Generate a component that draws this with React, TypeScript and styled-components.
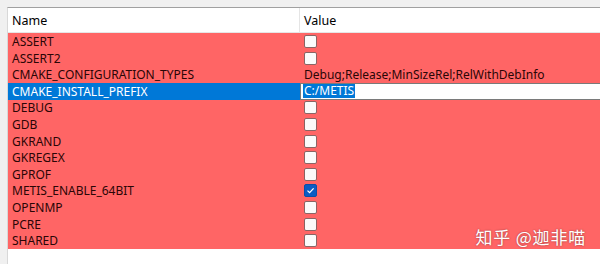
import React from "react";
import styled, { createGlobalStyle } from "styled-components";

const Global = createGlobalStyle`
  html, body { margin: 0; padding: 0; }
  body {
    width: 600px;
    height: 264px;
    overflow: hidden;
    background: #f0f0f0;
    font-family: "Noto Sans", "Noto Sans CJK SC", sans-serif;
  }
`;

const Frame = styled.div`
  padding: 7px 0 0 7px;
  height: 264px;
  box-sizing: border-box;
`;

const Table = styled.div`
  background: #ffffff;
  border-top: 1px solid #a0a0a0;
  border-left: 1px solid #d8d8d8;
  height: 256px;
  position: relative;
`;

const Header = styled.div`
  display: grid;
  grid-template-columns: 292px 1fr;
  height: 24px;
  border-bottom: 1px solid #e6e6e6;
  font-size: 12.5px;
  color: #000;
`;

const HeadCell = styled.div<{ $divider?: boolean }>`
  display: flex;
  align-items: center;
  padding-left: 4px;
  border-right: ${(p) => (p.$divider ? "1px solid #e5e5e5" : "none")};
`;

const Row = styled.div`
  display: grid;
  grid-template-columns: 292px 1fr;
  height: 16.6px;
  background: #ff6565;
  font-size: 12px;
  color: #2a0606;
`;

const NameCell = styled.div<{ $selected?: boolean }>`
  display: flex;
  align-items: center;
  padding-left: 4px;
  white-space: nowrap;
  background: ${(p) => (p.$selected ? "#0078d7" : "transparent")};
  color: ${(p) => (p.$selected ? "#ffffff" : "inherit")};
`;

const ValueCell = styled.div`
  display: flex;
  align-items: center;
  padding-left: 4px;
  white-space: nowrap;
`;

const Editor = styled.div`
  display: flex;
  align-items: center;
  background: #ffffff;
  border: 1px solid #7a7a7a;
  border-right: none;
  box-sizing: border-box;
  padding-left: 2px;
`;

const Selection = styled.span`
  background: #0078d7;
  color: #ffffff;
  padding: 0 1px;
  line-height: 14px;
`;

const Box = styled.span<{ $checked?: boolean }>`
  width: 11px;
  height: 11px;
  border-radius: 2px;
  border: 1px solid ${(p) => (p.$checked ? "#0a4fa8" : "#8a6464")};
  background: ${(p) => (p.$checked ? "#0b5cc4" : "#fbfbfb")};
  display: inline-flex;
  align-items: center;
  justify-content: center;
`;

const Watermark = styled.div`
  position: absolute;
  right: 14px;
  bottom: 15px;
  font-size: 17px;
  color: #ffffff;
  text-shadow: 0 0 2px rgba(0, 0, 0, 0.45);
  font-family: "Noto Sans CJK SC", sans-serif;
  letter-spacing: 0.8px;
`;

type Item = { name: string; value: string; selected?: boolean };

const items: Item[] = [
  { name: "ASSERT", value: "off" },
  { name: "ASSERT2", value: "off" },
  { name: "CMAKE_CONFIGURATION_TYPES", value: "Debug;Release;MinSizeRel;RelWithDebInfo" },
  { name: "CMAKE_INSTALL_PREFIX", value: "C:/METIS", selected: true },
  { name: "DEBUG", value: "off" },
  { name: "GDB", value: "off" },
  { name: "GKRAND", value: "off" },
  { name: "GKREGEX", value: "off" },
  { name: "GPROF", value: "off" },
  { name: "METIS_ENABLE_64BIT", value: "on" },
  { name: "OPENMP", value: "off" },
  { name: "PCRE", value: "off" },
  { name: "SHARED", value: "off" },
];

const Check = () => (
  <svg width="9" height="9" viewBox="0 0 9 9">
    <path d="M1.5 4.6 L3.6 6.6 L7.6 2.4" fill="none" stroke="#ffffff" strokeWidth="1.3" />
  </svg>
);

const App = () => (
  <>
    <Global />
    <Frame>
      <Table>
        <Header>
          <HeadCell $divider>Name</HeadCell>
          <HeadCell>Value</HeadCell>
        </Header>
        {items.map((it) => (
          <Row key={it.name}>
            <NameCell $selected={it.selected}>{it.name}</NameCell>
            {it.selected ? (
              <Editor>
                <Selection>{it.value}</Selection>
              </Editor>
            ) : (
              <ValueCell>
                {it.value === "off" && <Box />}
                {it.value === "on" && (
                  <Box $checked>
                    <Check />
                  </Box>
                )}
                {it.value !== "off" && it.value !== "on" && it.value}
              </ValueCell>
            )}
          </Row>
        ))}
        <Watermark>知乎 @迦非喵</Watermark>
      </Table>
    </Frame>
  </>
);

export default App;
